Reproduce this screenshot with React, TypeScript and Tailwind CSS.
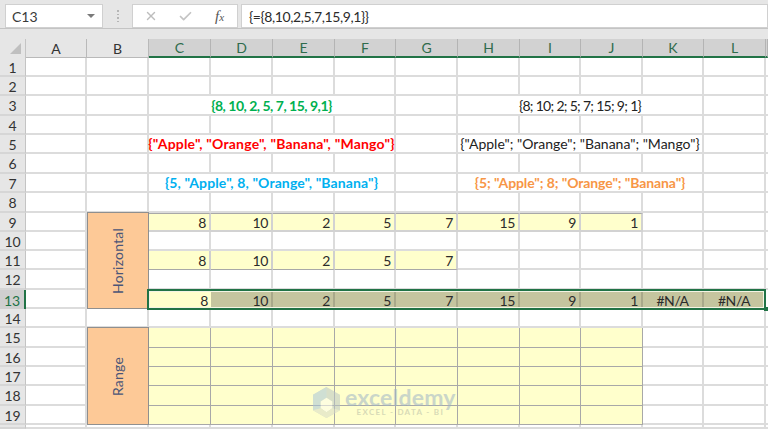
import { Fragment } from 'react';
import type { ReactNode } from 'react';
import { Check, X } from 'lucide-react';

const columns = ['A', 'B', 'C', 'D', 'E', 'F', 'G', 'H', 'I', 'J', 'K', 'L', ''];
const rows = Array.from({ length: 20 }, (_, i) => i + 1);

type Merged = {
  span: string;
  text: string;
  color: string;
  covers: string[];
};

const merged: Record<string, Merged> = {
  C3: { span: 'col-span-4', text: '{8, 10, 2, 5, 7, 15, 9,1}', color: 'font-bold tracking-[-0.5px] text-[#00b050]', covers: ['D3', 'E3', 'F3'] },
  H3: { span: 'col-span-4', text: '{8; 10; 2; 5; 7; 15; 9; 1}', color: 'tracking-[-0.7px] text-[#222222]', covers: ['I3', 'J3', 'K3'] },
  C5: { span: 'col-span-4', text: '{"Apple", "Orange", "Banana", "Mango"}', color: 'font-bold tracking-[0.2px] text-[#ff0000]', covers: ['D5', 'E5', 'F5'] },
  H5: { span: 'col-span-4', text: '{"Apple"; "Orange"; "Banana"; "Mango"}', color: 'text-[#222222]', covers: ['I5', 'J5', 'K5'] },
  C7: { span: 'col-span-4', text: '{5, "Apple", 8, "Orange", "Banana"}', color: 'font-bold tracking-[0.12px] text-[#00b0f0]', covers: ['D7', 'E7', 'F7'] },
  H7: { span: 'col-span-4', text: '{5; "Apple"; 8; "Orange"; "Banana"}', color: 'font-bold tracking-[-0.1px] text-[#f79646]', covers: ['I7', 'J7', 'K7'] },
};

const covered = new Set([
  ...Object.values(merged).flatMap((m) => m.covers),
  'B10', 'B11', 'B12', 'B13', 'B16', 'B17', 'B18', 'B19',
]);

const row9 = ['8', '10', '2', '5', '7', '15', '9', '1'];
const row11 = ['8', '10', '2', '5', '7'];
const row13 = ['8', '10', '2', '5', '7', '15', '9', '1', '#N/A', '#N/A'];

function Cell({ col, row }: { col: string; row: number }) {
  const id = `${col}${row}`;
  if (covered.has(id)) return null;

  const m = merged[id];
  if (m) {
    return (
      <div className={`${m.span} flex items-center justify-center border-r-2 border-b-2 border-[#dcdcdc] bg-white pt-[1px] text-[14px] leading-none whitespace-nowrap ${m.color}`}>
        {m.text}
      </div>
    );
  }

  if (id === 'B9' || id === 'B15') {
    return (
      <div className="row-span-5 -mt-px flex items-center justify-center border border-[#8f8f8f] bg-[#fdc997]">
        <span className="rotate-180 text-[14px] leading-none tracking-[0.2px] text-[#4a5578] [writing-mode:vertical-rl]">
          {id === 'B9' ? 'Horizontal' : 'Range'}
        </span>
      </div>
    );
  }

  const idx = columns.indexOf(col) - 2;
  let value: ReactNode = null;
  let tone = 'border-r-2 border-b-2 border-[#dcdcdc] bg-white';

  if (row === 9 && idx >= 0 && idx < row9.length) {
    value = row9[idx];
    tone = 'border-r-2 border-b-2 border-t border-[#d2d2d2] border-t-[#a8a8a8] bg-[#ffffcc]';
  }
  if (row === 11 && idx >= 0 && idx < row11.length) {
    value = row11[idx];
    tone = 'border-r-2 border-b border-[#cfcfcf] border-b-[#a8a8a8] bg-[#ffffcc]';
  }
  if (row === 13 && idx >= 0 && idx < row13.length) {
    value = row13[idx];
    tone = idx === 0 ? 'bg-[#ffffcc]' : 'border-r-2 border-[#a9a98a] bg-[#c5c59f]';
  }
  if (row >= 15 && row <= 19 && idx >= 0 && idx < 8) {
    tone = 'border-r border-b border-[#a8a8a8] bg-[#ffffcc]';
  }

  const isError = idx >= 8;

  return (
    <div className={`flex items-center pt-[2px] text-[14px] leading-none tracking-[-0.4px] text-[#2b2b2b] ${isError ? 'justify-center' : 'justify-end pr-[3px]'} ${tone}`}>
      {value}
    </div>
  );
}

function FormulaBar() {
  return (
    <div className="flex h-[29px] items-start gap-0 border-b border-[#c4c4c4] pt-[4px] pl-[5px]">
      <div className="flex h-[24px] w-[98px] items-center justify-between border border-[#d0d0d0] bg-white pr-[7px] pl-[6px] text-[14px] text-[#3a3a3a]">
        <span>C13</span>
        <span className="h-0 w-0 border-x-[4px] border-t-[4px] border-x-transparent border-t-[#7a7a7a]" />
      </div>
      <div className="flex h-[24px] w-[29px] flex-col items-center justify-center gap-[2px]">
        <span className="h-[1.5px] w-[2px] bg-[#b5b5b5]" />
        <span className="h-[1.5px] w-[2px] bg-[#b5b5b5]" />
        <span className="h-[1.5px] w-[2px] bg-[#b5b5b5]" />
        <span className="h-[1.5px] w-[2px] bg-[#b5b5b5]" />
      </div>
      <div className="flex h-[24px] w-[106px] items-center border border-[#d0d0d0] bg-white">
        <X className="ml-[11px] text-[#bdbdbd]" size={14} strokeWidth={2.4} />
        <Check className="ml-[20px] text-[#c4c4c4]" size={15} strokeWidth={2.8} />
        <span className="ml-[22px] font-['Liberation_Serif',serif] text-[15px] leading-none text-[#555555] italic">
          f<span className="text-[11px]">x</span>
        </span>
      </div>
      <div className="ml-[3px] flex h-[24px] flex-1 items-center border border-[#d0d0d0] bg-white pl-[7px] text-[14px] tracking-[-0.4px] text-[#2b2b2b]">
        {'{=\u007B8,10,2,5,7,15,9,1\u007D}'}
      </div>
    </div>
  );
}

function Watermark() {
  return (
    <div className="pointer-events-none absolute top-[387px] left-[313px] flex items-start gap-[5px] opacity-55">
      <svg width="27" height="31" viewBox="0 0 28 32">
        <path d="M14 0 L28 8 V24 L14 32 L0 24 V8 Z" fill="#b9c6c6" />
        <path d="M0 8 L14 0 V11 L8 15 V22 L0 24 Z" fill="#a9c6da" />
        <path d="M14 11 L20 15 V22 L14 26 L8 22 V15 Z" fill="#fdfdf0" />
        <path d="M8 22 L14 26 L20 22 L28 24 L14 32 L0 24 Z" fill="#d8dcc8" />
      </svg>
      <div className="flex flex-col items-center">
        <span className="text-[23px] leading-[21px] font-bold tracking-[0.2px] text-[#9fb6c8]">exceldemy</span>
        <span className="text-[8px] leading-[9px] font-bold tracking-[1.3px] text-[#b9bda6]">EXCEL - DATA - BI</span>
      </div>
    </div>
  );
}

export default function App() {
  return (
    <div className="relative h-[429px] w-[768px] overflow-hidden bg-[#e6e6e6] font-['Lato','Liberation_Sans',sans-serif]">
      <FormulaBar />
      <div className="mt-[10px] grid grid-cols-[26px_61px_62px_62px_62px_62px_61px_62px_62px_61px_62px_61px_62px_2px] grid-rows-[19px_19px_19px_20px_19px_19px_20px_19px_20px_19px_19px_19px_20px_19px_19px_20px_19px_19px_20px_19px_4px]">
        <div className="flex items-center justify-end border-r border-[#c4c4c4] pr-[4px]">
          <span className="h-0 w-0 border-b-[11px] border-l-[11px] border-b-[#bfbfbf] border-l-transparent" />
        </div>
        {columns.map((col, i) => (
          <div
            key={col || 'M'}
            className={
              i >= 2
                ? 'flex items-center justify-center border-r border-b-2 border-[#b4b4b4] border-b-[#217346] bg-[#d2d2d2] text-[14px] text-[#2f6b4c]'
                : 'flex items-center justify-center border-r border-b border-[#b9b9b9] text-[14px] text-[#333333]'
            }
          >
            {col}
          </div>
        ))}
        {rows.map((row) => (
          <Fragment key={row}>
            <div
              className={
                row === 13
                  ? 'flex items-center justify-center border-r-2 border-[#217346] bg-[#cfcfcf] pt-[1px] text-[14px] text-[#217346]'
                  : 'flex items-center justify-center border-r border-b-2 border-[#c4c4c4] border-b-[#d6d6d6] pt-[1px] text-[14px] text-[#333333]'
              }
            >
              {row <= 19 ? row : ''}
            </div>
            {columns.map((col) => (
              <Cell key={`${col || 'M'}${row}`} col={col || 'M'} row={row} />
            ))}
          </Fragment>
        ))}
      </div>
      <div className="pointer-events-none absolute top-[289px] left-[147px] h-[21px] w-[619px] border-2 border-[#217346] shadow-[inset_0_0_0_1px_#f4f4e4]" />
      <div className="absolute top-[307px] left-[764px] h-[4px] w-[4px] bg-[#217346]" />
      <Watermark />
    </div>
  );
}
